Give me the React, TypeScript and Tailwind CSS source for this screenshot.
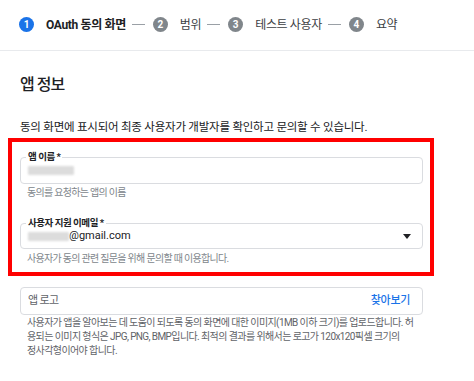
import React from 'react';

const steps = [
  { n: 1, label: 'OAuth 동의 화면', active: true },
  { n: 2, label: '범위', active: false },
  { n: 3, label: '테스트 사용자', active: false },
  { n: 4, label: '요약', active: false },
];

const font = { fontFamily: 'Roboto, "Noto Sans CJK KR", sans-serif' };

const Blur = ({ w }: { w: number }) => (
  <span
    className="inline-block h-[9px] bg-[#dcdcdc] blur-[1px] rounded-[1px]"
    style={{ width: w }}
  />
);

const App = () => {
  return (
    <div className="w-[474px] h-[381px] bg-white overflow-hidden text-[#202124]" style={font}>
      {/* stepper */}
      <div className="h-[51px] border-b border-[#e8eaed] flex items-center pl-[19px] pb-[1px]">
        {steps.map((s, i) => (
          <div key={s.n} className="flex items-center">
            <span
              className={
                'w-[15px] h-[15px] rounded-full flex items-center justify-center text-[10px] font-bold text-white ' +
                (s.active ? 'bg-[#1a73e8]' : 'bg-[#80868b]')
              }
            >
              {s.n}
            </span>
            <span
              className={
                'ml-[12px] text-[12px] tracking-[-0.03em] ' +
                (s.active ? 'font-bold text-[#202124]' : 'text-[#3c4043]')
              }
            >
              {s.label}
            </span>
            {i < steps.length - 1 && (
              <span className="ml-[6px] mr-[8px] w-[13px] h-px bg-[#9aa0a6]" />
            )}
          </div>
        ))}
      </div>

      <div className="px-[8px]">
        <h2 className="mt-[24px] ml-[12px] text-[16px] leading-[20px] font-medium tracking-[-0.06em]">앱 정보</h2>
        <p className="mt-[24px] ml-[12px] text-[11.5px] leading-[16px] tracking-[-0.02em]">
          동의 화면에 표시되어 최종 사용자가 개발자를 확인하고 문의할 수 있습니다.
        </p>

        {/* highlighted block */}
        <div className="mt-[3px] w-[426px] border-4 border-[#f00] pt-[15px] pb-[6px] pl-[8px] pr-[7px]">
          <div className="relative h-[27px] border border-[#dadce0] rounded-[4px] flex items-center px-[7px]">
            <span className="absolute -top-[7px] left-[5px] bg-white px-[2px] text-[9.5px] leading-[12px] font-bold tracking-[-0.05em]">
              앱 이름 *
            </span>
            <Blur w={46} />
          </div>
          <p className="mt-[2px] pl-[7px] text-[10px] leading-[14px] text-[#80868b] tracking-[-0.07em]">
            동의를 요청하는 앱의 이름
          </p>

          <div className="mt-[23px] relative h-[26px] border border-[#dadce0] rounded-[4px] flex items-center pl-[7px] pr-[11px]">
            <span className="absolute -top-[7px] left-[5px] bg-white px-[2px] text-[9.5px] leading-[12px] font-bold tracking-[-0.05em]">
              사용자 지원 이메일 *
            </span>
            <Blur w={41} />
            <span className="text-[11px] text-[#202124]">@gmail.com</span>
            <svg className="ml-auto" width="8" height="5" viewBox="0 0 8 5">
              <path d="M0 0h8L4 5z" fill="#202124" />
            </svg>
          </div>
          <p className="mt-[3px] pl-[7px] text-[10px] leading-[14px] text-[#80868b] tracking-[-0.07em]">
            사용자가 동의 관련 질문을 위해 문의할 때 이용합니다.
          </p>
        </div>

        {/* app logo */}
        <div className="mt-[11px] ml-[12px] w-[403px] h-[28px] border border-[#dadce0] rounded-[4px] flex items-center justify-between pl-[7px] pr-[12px]">
          <span className="text-[11px] text-[#5f6368] tracking-[-0.06em]">앱 로고</span>
          <span className="text-[11px] font-medium text-[#1a73e8] tracking-[-0.03em]">찾아보기</span>
        </div>
        <p className="mt-[1px] ml-[19px] w-[396px] whitespace-nowrap text-[10px] leading-[14px] text-[#5f6368] tracking-[-0.06em]">
          사용자가 앱을 알아보는 데 도움이 되도록 동의 화면에 대한 이미지(1MB 이하 크기)를 업로드합니다. 허
          <br />
          용되는 이미지 형식은 JPG, PNG, BMP입니다. 최적의 결과를 위해서는 로고가 120x120픽셀 크기의
          <br />
          정사각형이어야 합니다.
        </p>
      </div>
    </div>
  );
};

export default App;
